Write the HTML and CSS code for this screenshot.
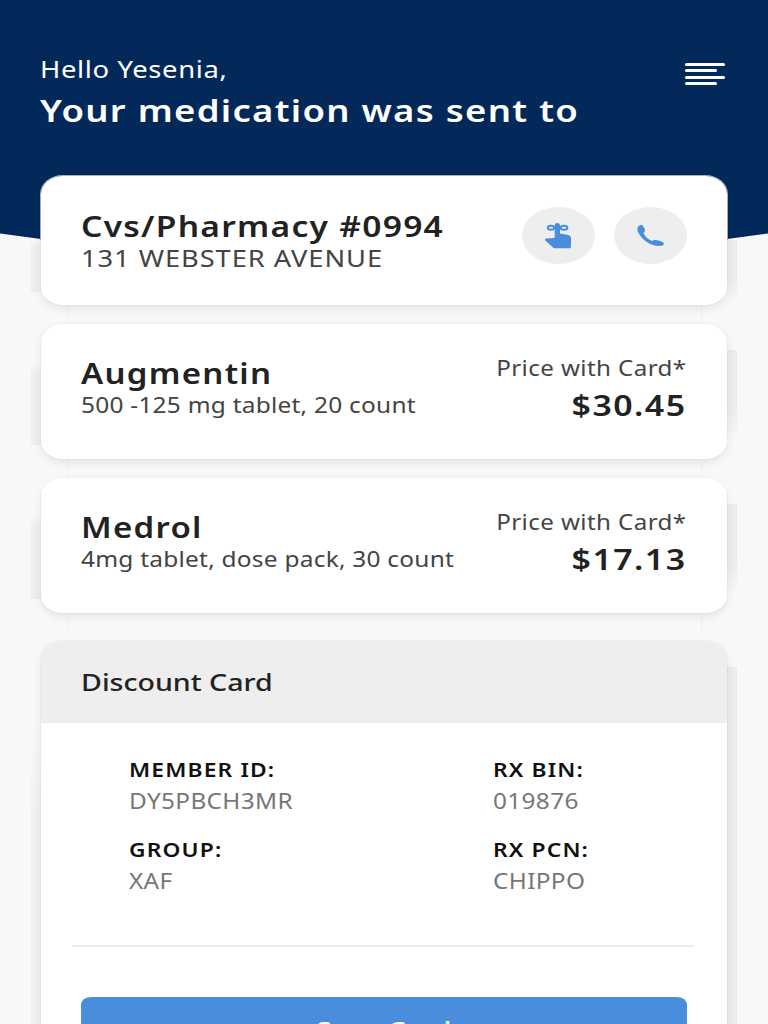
FILE: index.html
```html
<!DOCTYPE html>
<html lang="en">
<head>
  <meta charset="UTF-8" />
  <title>Your medication</title>
  <link rel="stylesheet" href="styles.css">
</head>
<body>
  <header class="hero">
    <div class="hero-text">
      <p class="hello">Hello Yesenia,</p>
      <h1>Your medication was sent to</h1>
    </div>
    <button class="menu" aria-label="Menu">
      <span></span><span class="short"></span><span></span><span class="short"></span>
    </button>
  </header>

  <main class="content">
    <section class="card pharmacy">
      <div>
        <h2>Cvs/Pharmacy #0994</h2>
        <p class="address">131 WEBSTER AVENUE</p>
      </div>
      <div class="actions">
        <button class="round" aria-label="Directions">
          <svg width="28" height="26" viewBox="0 0 28 26">
            <ellipse cx="6" cy="4.800" rx="3.200" ry="2" fill="none" stroke="#4a8ddc" stroke-width="2"/>
            <ellipse cx="19" cy="4.800" rx="3.400" ry="2" fill="none" stroke="#4a8ddc" stroke-width="2"/>
            <path fill="#4a8ddc" d="M9.700 2.700a2.650 2.650 0 0 1 5.300 0V10.500L23 12c2 .4 3 1.500 3 3.500v6c0 1.500-.2 2.700-.5 3.800H10c-1 0-1.600-.4-2.200-1L.3 17.500C-.3 16.600 .2 15.700 1.300 15.600L9.700 15z"/>
          </svg>
        </button>
        <button class="round" aria-label="Call">
          <svg width="28" height="22" viewBox="0 0 28 22">
            <path fill="#4a8ddc" d="M1.500 1.200C3-.2 5-.2 6 .9 7 2 8 4 8 5.400 8 6.800 7 7.400 6.300 8 8 11.500 11 14.500 15 16 16 15.200 17.500 14.800 19 15 21.500 15.400 25 16.500 26.300 17.500 27.300 18.400 26.800 20 25.500 20.500 23.500 21.200 20 21.200 16 20 9 17.800 3 12 .8 6.500 .1 4.600 .3 2.400 1.500 1.200z"/>
          </svg>
        </button>
      </div>
    </section>

    <section class="card drug">
      <div>
        <h2>Augmentin</h2>
        <p class="detail">500 -125 mg tablet, 20 count</p>
      </div>
      <div class="price">
        <p class="price-label">Price with Card*</p>
        <p class="amount">$30.45</p>
      </div>
    </section>

    <section class="card drug">
      <div>
        <h2>Medrol</h2>
        <p class="detail">4mg tablet, dose pack, 30 count</p>
      </div>
      <div class="price">
        <p class="price-label">Price with Card*</p>
        <p class="amount">$17.13</p>
      </div>
    </section>

    <section class="card discount">
      <div class="discount-head">
        <h3>Discount Card</h3>
      </div>
      <div class="discount-body">
        <dl class="ids">
          <div><dt>MEMBER ID:</dt><dd>DY5PBCH3MR</dd></div>
          <div><dt>RX BIN:</dt><dd>019876</dd></div>
          <div><dt>GROUP:</dt><dd>XAF</dd></div>
          <div><dt>RX PCN:</dt><dd>CHIPPO</dd></div>
        </dl>
        <hr />
        <button class="save"><span>Save Card</span></button>
      </div>
    </section>
  </main>
</body>
</html>
```

FILE: styles.css
```css
* {
  box-sizing: border-box;
}

html, body {
  height: 1024px;
  overflow: hidden;
}

body {
  margin: 0;
  font-family: 'Noto Sans', sans-serif;
  background-color: #f8f8f8;
  color: #222222;
}

h1, h2, h3, p, dl, dd {
  margin: 0;
}

button {
  font-family: inherit;
  border: none;
  padding: 0;
}

/* the text in this design is drawn wide, so each text style gets a scaleX */
.hello, h1, h2, h3, .address, .detail, dt, dd {
  width: fit-content;
  white-space: nowrap;
  transform-origin: left center;
}

.hero {
  height: 262px;
  padding: 54px 43px 0 40px;
  display: flex;
  justify-content: space-between;
  align-items: flex-start;
  color: #ffffff;
  background-color: #03295a;
  clip-path: circle(2590px at 50% -2328px);
}

.hello {
  font-size: 23px;
  line-height: 30px;
  letter-spacing: 0.55px;
  transform: scaleX(1.19);
}

h1 {
  margin-top: 7px;
  font-size: 30px;
  line-height: 40px;
  font-weight: 600;
  letter-spacing: 1.05px;
  transform: scaleX(1.217);
}

.menu {
  width: 40px;
  margin-top: 9px;
  display: flex;
  flex-direction: column;
  gap: 3.330px;
  background: none;
}

.menu span {
  display: block;
  height: 3px;
  width: 40px;
  border-radius: 2px;
  background-color: #ffffff;
}

.menu .short {
  width: 32px;
}

.content {
  margin-top: -86px;
  padding: 0 41px;
  position: relative;
  isolation: isolate;
}

.card {
  --band-left-top: 38px;
  --band-left-h: 83px;
  --band-right-top: 26px;
  --band-right-h: 92px;
  position: relative;
  background-color: #ffffff;
  border-radius: 22px / 18px;
  box-shadow: 0 0 0 1px rgba(0, 0, 0, 0.025), 0 4px 9px rgba(0, 0, 0, 0.08);
}

/* faint strips that stick out beside and under each card */
.card::before {
  content: "";
  position: absolute;
  top: 0;
  bottom: -18px;
  left: -10px;
  right: -10px;
  z-index: -1;
  background:
    linear-gradient(#f0f0f0, #f0f0f0) 36px bottom / 1px 24px no-repeat,
    linear-gradient(#f0f0f0, #f0f0f0) calc(100% - 35px) bottom / 1px 24px no-repeat,
    linear-gradient(transparent, #eeeeee 15%) 0 var(--band-left-top) / 10px var(--band-left-h) no-repeat,
    linear-gradient(#ececec 65%, transparent) 100% var(--band-right-top) / 10px var(--band-right-h) no-repeat;
}

.pharmacy, .drug {
  display: flex;
  justify-content: space-between;
  padding-left: 40px;
  padding-right: 40px;
}

.pharmacy {
  --band-left-top: 64px;
  --band-left-h: 52px;
  --band-right-top: 64px;
  --band-right-h: 62px;
  height: 129px;
  align-items: center;
  margin-bottom: 19px;
}

/* thin light edge where the first card sits on the navy */
.pharmacy::after {
  content: "";
  position: absolute;
  top: -1px;
  left: -1px;
  right: -1px;
  height: 64px;
  z-index: -1;
  border: 1px solid #aeb8c7;
  border-bottom: none;
  border-radius: 23px 23px 0 0 / 19px 19px 0 0;
}

.drug {
  height: 135px;
  padding-top: 31px;
  margin-bottom: 19px;
}

h2 {
  font-size: 29px;
  line-height: 36px;
  font-weight: 600;
  letter-spacing: 1.1px;
  transform: scaleX(1.14);
}

.pharmacy h2 {
  margin-top: -2px;
  transform: scaleX(1.157);
}

.address {
  font-size: 23px;
  line-height: 28px;
  letter-spacing: 0.8px;
  color: #444444;
  transform: scaleX(1.185);
}

.detail {
  font-size: 21px;
  line-height: 28px;
  letter-spacing: 0.2px;
  color: #444444;
  transform: scaleX(1.165);
}

.actions {
  display: flex;
  gap: 19px;
  margin-top: -10px;
}

.round {
  width: 73px;
  height: 57px;
  border-radius: 50%;
  background-color: #eeeeee;
  display: flex;
  align-items: center;
  justify-content: center;
}

.price {
  margin-top: -1px;
  text-align: right;
}

.price-label {
  font-size: 21px;
  line-height: 28px;
  letter-spacing: 0.35px;
  color: #444444;
  white-space: nowrap;
  transform: scaleX(1.15);
  transform-origin: right center;
}

.amount {
  margin-top: 5px;
  font-size: 28px;
  line-height: 36px;
  font-weight: 600;
  letter-spacing: 1.2px;
  transform: scaleX(1.21);
  transform-origin: right center;
}

.discount {
  --band-left-top: 85px;
  --band-left-h: 400px;
  --band-right-h: 400px;
  margin-top: 28px;
}

.discount::before {
  background:
    linear-gradient(transparent, #f0f0f0 25%) 0 var(--band-left-top) / 10px var(--band-left-h) no-repeat,
    linear-gradient(#ececec, #ececec) 100% var(--band-right-top) / 10px var(--band-right-h) no-repeat;
}

.discount-head {
  height: 82px;
  padding-left: 40px;
  border-radius: 22px 22px 0 0 / 18px 18px 0 0;
  background-color: #eeeeee;
}

h3 {
  font-size: 24px;
  line-height: 82px;
  font-weight: 500;
  transform: scaleX(1.19);
}

.discount-body {
  padding: 32px 33px 0 31px;
}

.ids {
  display: grid;
  grid-template-columns: 364px 1fr;
  row-gap: 18px;
  padding-left: 56.500px;
}

dt {
  font-size: 20px;
  line-height: 30px;
  font-weight: 600;
  letter-spacing: 1px;
  color: #111111;
  transform: scaleX(1.14);
}

dd {
  font-size: 21px;
  line-height: 32px;
  letter-spacing: 0.3px;
  color: #777777;
  transform: scaleX(1.16);
}

hr {
  margin: 48px 0 0;
  border: none;
  height: 2px;
  background-color: #eeeeee;
}

.save {
  display: block;
  width: 606px;
  height: 64px;
  margin: 50px 0 0 9px;
  border-radius: 10px / 8px;
  font-size: 24px;
  font-weight: 500;
  color: #ffffff;
  background-color: #4a8ddc;
}

.save span {
  display: inline-block;
  transform: scaleX(1.2);
}
```
